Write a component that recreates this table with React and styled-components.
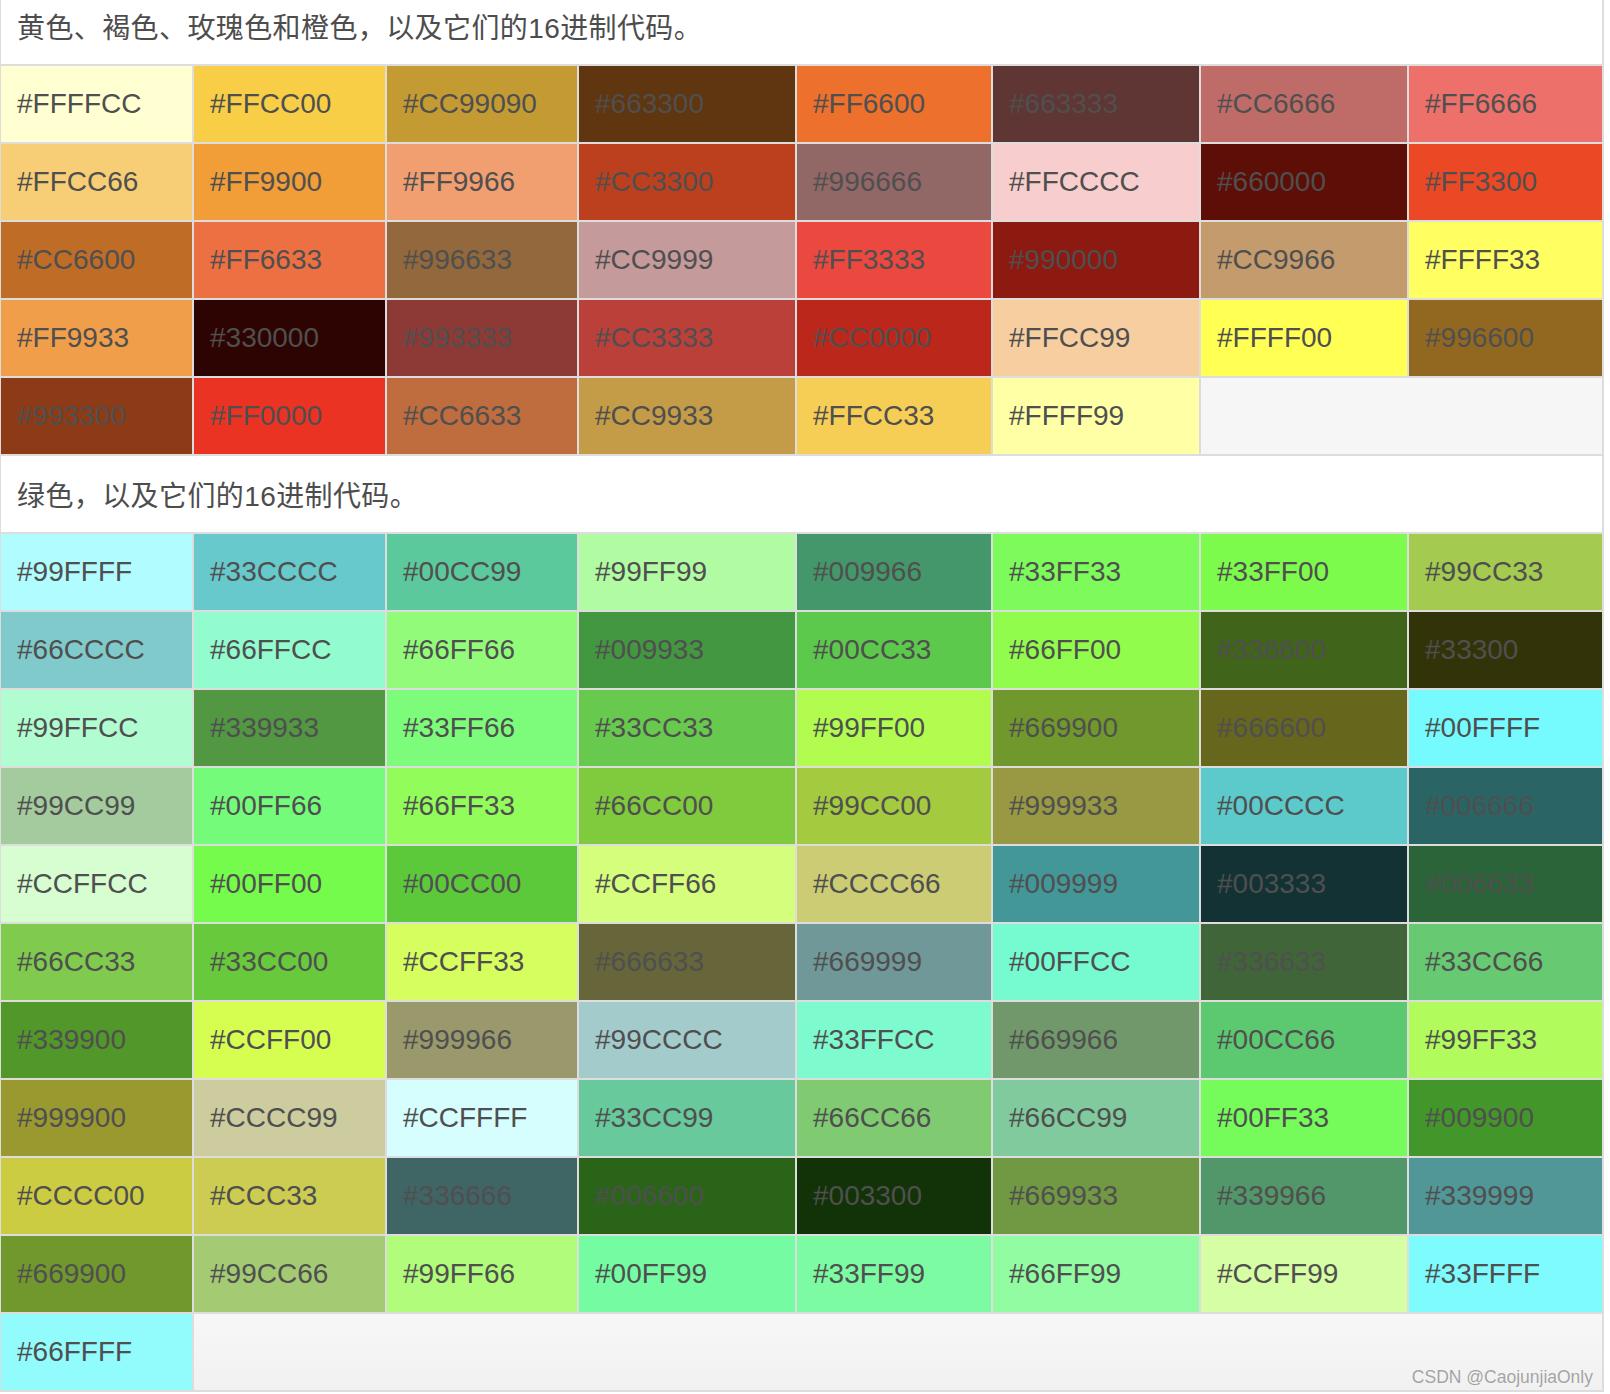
import React from 'react';
import styled, { createGlobalStyle } from 'styled-components';

// the screenshot was taken on a P3 display, so every swatch shows up shifted;
// convert the sRGB hex into the numbers the screenshot actually holds
const lin = (c) => {
  const v = c / 255;
  return v <= 0.04045 ? v / 12.92 : Math.pow((v + 0.055) / 1.055, 2.4);
};
const enc = (v) => {
  const c = Math.min(1, Math.max(0, v));
  const s = c <= 0.0031308 ? 12.92 * c : 1.055 * Math.pow(c, 1 / 2.4) - 0.055;
  return Math.round(s * 255);
};
const toDisplay = (hex) => {
  const h = hex.replace('#', '');
  const r = lin(parseInt(h.slice(0, 2), 16));
  const g = lin(parseInt(h.slice(2, 4), 16));
  const b = lin(parseInt(h.slice(4, 6), 16));
  const pr = 0.822462 * r + 0.177538 * g;
  const pg = 0.033194 * r + 0.966806 * g;
  const pb = 0.017083 * r + 0.072397 * g + 0.91052 * b;
  return `rgb(${enc(pr)}, ${enc(pg)}, ${enc(pb)})`;
};

const GlobalStyle = createGlobalStyle`
  html, body {
    margin: 0;
    padding: 0;
    background: #ffffff;
  }
  body {
    font-family: "Liberation Sans", "Noto Sans CJK SC", sans-serif;
  }
`;

const Page = styled.div`
  position: relative;
  width: 1610px;
  height: 1394px;
  background: #ffffff;
  overflow: hidden;
`;

const Table = styled.div`
  display: grid;
  grid-template-columns: 191px 191px 190px 216px 194px 206px 206px 193px;
  gap: 2px;
  width: fit-content;
  background: #dddddd;
  border-left: 1px solid #dddddd;
  border-right: 2px solid #dddddd;
  padding-bottom: 2px;
`;

const Caption = styled.div`
  grid-column: 1 / -1;
  display: flex;
  align-items: center;
  height: ${(p) => (p.$clipped ? '52px' : '76px')};
  padding: 0 16px ${(p) => (p.$clipped ? '12px' : '0')};
  background: #ffffff;
  color: #4d4d4d;
  font-family: "Liberation Sans", "Noto Sans CJK SC", sans-serif;
  font-size: 28px;
  letter-spacing: 0.4px;
  white-space: nowrap;
`;

const Swatch = styled.div`
  display: flex;
  align-items: center;
  height: 76px;
  padding-left: 16px;
  background: ${(p) => toDisplay(p.$color)};
  color: #4f4f4f;
  font-family: "Liberation Sans", sans-serif;
  font-size: 28px;
  white-space: nowrap;
`;

const Filler = styled.div`
  grid-column: span ${(p) => p.$span};
  background: ${(p) => (p.$fade ? 'linear-gradient(#f7f7f7, #f1f1f1)' : '#f6f6f6')};
`;

const Watermark = styled.div`
  position: absolute;
  right: 17px;
  bottom: 7px;
  font-family: "Liberation Sans", sans-serif;
  font-size: 17.5px;
  line-height: 20px;
  color: #a3a3a3;
  text-shadow: 0 0 1px #ffffff;
`;

// label as written in the article; colour given where the label is a typo
const warm = [
  '#FFFFCC', '#FFCC00', ['#CC99090', '#CC9900'], '#663300', '#FF6600', '#663333', '#CC6666', '#FF6666',
  '#FFCC66', '#FF9900', '#FF9966', '#CC3300', '#996666', '#FFCCCC', '#660000', '#FF3300',
  '#CC6600', '#FF6633', '#996633', '#CC9999', '#FF3333', '#990000', '#CC9966', '#FFFF33',
  '#FF9933', '#330000', '#993333', '#CC3333', '#CC0000', '#FFCC99', '#FFFF00', '#996600',
  '#993300', '#FF0000', '#CC6633', '#CC9933', '#FFCC33', '#FFFF99',
];

const green = [
  '#99FFFF', '#33CCCC', '#00CC99', '#99FF99', '#009966', '#33FF33', '#33FF00', '#99CC33',
  '#66CCCC', '#66FFCC', '#66FF66', '#009933', '#00CC33', '#66FF00', '#336600', ['#33300', '#333300'],
  '#99FFCC', '#339933', '#33FF66', '#33CC33', '#99FF00', '#669900', '#666600', '#00FFFF',
  '#99CC99', '#00FF66', '#66FF33', '#66CC00', '#99CC00', '#999933', '#00CCCC', '#006666',
  '#CCFFCC', '#00FF00', '#00CC00', '#CCFF66', '#CCCC66', '#009999', '#003333', '#006633',
  '#66CC33', '#33CC00', '#CCFF33', '#666633', '#669999', '#00FFCC', '#336633', '#33CC66',
  '#339900', '#CCFF00', '#999966', '#99CCCC', '#33FFCC', '#669966', '#00CC66', '#99FF33',
  '#999900', '#CCCC99', '#CCFFFF', '#33CC99', '#66CC66', '#66CC99', '#00FF33', '#009900',
  '#CCCC00', ['#CCC33', '#CCCC33'], '#336666', '#006600', '#003300', '#669933', '#339966', '#339999',
  '#669900', '#99CC66', '#99FF66', '#00FF99', '#33FF99', '#66FF99', '#CCFF99', '#33FFFF',
  '#66FFFF',
];

const renderSwatches = (list, prefix) =>
  list.map((item, i) => {
    const [label, color] = Array.isArray(item) ? item : [item, item];
    return (
      <Swatch key={`${prefix}-${i}`} $color={color}>
        {label}
      </Swatch>
    );
  });

export default function App() {
  return (
    <Page>
      <GlobalStyle />
      <Table>
        <Caption $clipped>黄色、褐色、玫瑰色和橙色，以及它们的16进制代码。</Caption>
        {renderSwatches(warm, 'w')}
        <Filler $span={8 - (warm.length % 8)} />
        <Caption>绿色，以及它们的16进制代码。</Caption>
        {renderSwatches(green, 'g')}
        <Filler $span={8 - (green.length % 8)} $fade />
      </Table>
      <Watermark>CSDN @CaojunjiaOnly</Watermark>
    </Page>
  );
}
